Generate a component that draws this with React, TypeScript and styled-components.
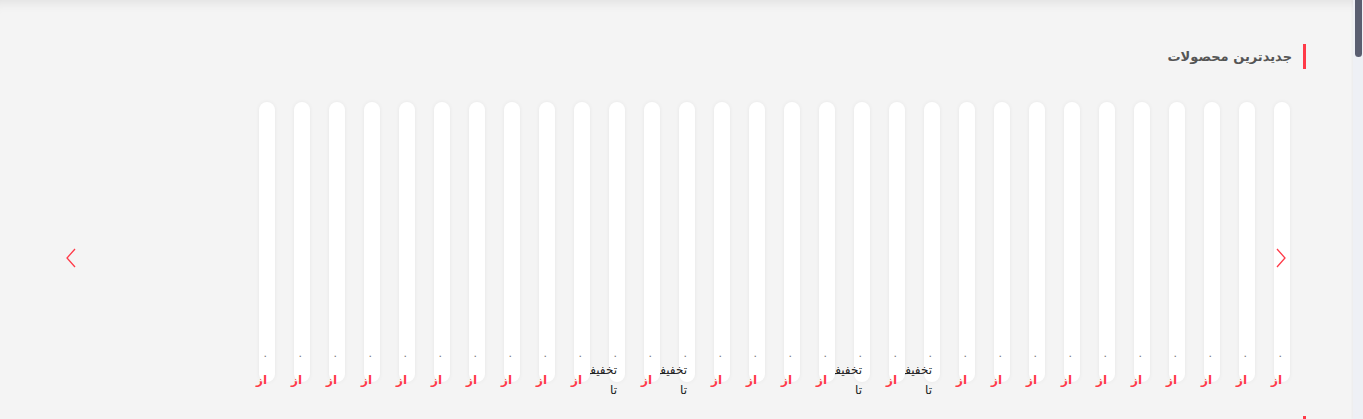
import React from "react";
import styled, { createGlobalStyle } from "styled-components";

const RED = "#ff3a48";

const GlobalStyle = createGlobalStyle`
    html, body {
        background: #f4f4f4;
        overflow: hidden;
    }
    body {
        margin: 0;
        font-family: "DejaVu Sans", "Noto Sans", sans-serif;
    }
`;

const sections = [
    "جدیدترین محصولات",
    "پرفروش‌ترین محصولات",
    "پیشنهاد ویژه",
];

// indices (from the right) of the cards that carry a discount
const discounted = [10, 12, 17, 19];

const products = Array.from({ length: 30 }, (_, i) => ({
    id: i,
    price: ".",
    discount: discounted.includes(i),
}));

const Chevron = ({ dir }: { dir: "left" | "right" }) => (
    <svg width="10" height="20" viewBox="0 0 10 20" fill="none">
        <polyline
            points={dir === "right" ? "1,1 9,10 1,19" : "9,1 1,10 9,19"}
            stroke={RED}
            strokeWidth="1.3"
        />
    </svg>
);

const ProductCard = ({ price, discount }: { price: string; discount: boolean }) => (
    <Card>
        <ImageBox />
        <PriceDot>{price}</PriceDot>
        {discount ? (
            <>
                <DiscountLabel>تخفیف</DiscountLabel>
                <DiscountLabel>تا</DiscountLabel>
            </>
        ) : (
            <FromLabel>از</FromLabel>
        )}
    </Card>
);

const App = () => {
    return (
        <Page>
            <GlobalStyle />
            {sections.map((title) => (
                <Section key={title}>
                    <Title>{title}</Title>
                    <Carousel>
                        <Track>
                            {products.map((p) => (
                                <ProductCard key={p.id} price={p.price} discount={p.discount} />
                            ))}
                        </Track>
                        <Arrow side="right" aria-label="next">
                            <Chevron dir="right" />
                        </Arrow>
                        <Arrow side="left" aria-label="previous">
                            <Chevron dir="left" />
                        </Arrow>
                    </Carousel>
                </Section>
            ))}
            <ScrollRail>
                <ScrollThumb />
            </ScrollRail>
        </Page>
    );
};

const Page = styled.main`
    direction: rtl;
    padding: 44px 10px 0 0;
    box-shadow: inset 0 12px 12px -10px rgba(0, 0, 0, 0.09);
`;

const ScrollRail = styled.div`
    position: fixed;
    top: 0;
    right: 0;
    bottom: 0;
    width: 10px;
    background: #eef0f5;
    box-shadow: -1px 0 2px rgba(0, 0, 0, 0.04);
    z-index: 10;
`;

const ScrollThumb = styled.div`
    width: 7px;
    height: 57px;
    margin-right: 1px;
    background: #5a5e70;
    border-radius: 0 0 4px 4px;
`;

const Section = styled.section`
    max-width: 1259px;
    margin: 0 auto 2px;
`;

const Title = styled.h2`
    margin: 0 0 33px;
    height: 25px;
    padding-right: 11px;
    border-right: 3px solid ${RED};
    font-size: 13px;
    font-weight: bold;
    line-height: 25px;
    color: #555;
`;

const Carousel = styled.div`
    position: relative;
    height: 312px;
`;

const Track = styled.div`
    display: flex;
    align-items: flex-start;
    gap: 19px;
    padding-right: 16px;
`;

const Card = styled.div`
    position: relative;
    flex: none;
    display: flex;
    flex-direction: column;
    box-sizing: border-box;
    width: 16px;
    height: 280px;
    padding: 0 8px;
    background: #fff;
    border-radius: 8px;
    box-shadow: 0 0 4px rgba(0, 0, 0, 0.06);
    white-space: nowrap;
`;

const ImageBox = styled.div`
    flex: none;
    height: 246px;
`;

const PriceDot = styled.div`
    font-size: 11px;
    line-height: 12px;
    color: #777;
`;

const FromLabel = styled.div`
    margin-top: 10px;
    font-size: 12px;
    font-weight: bold;
    line-height: 20px;
    color: ${RED};
`;

const DiscountLabel = styled.div`
    font-size: 12px;
    line-height: 20px;
    color: #222;
    &:first-of-type {
        margin-top: 1px;
    }
`;

const Arrow = styled.button<{ side: "left" | "right" }>`
    position: absolute;
    top: 50%;
    ${(p) => (p.side === "right" ? "right: 20px;" : "left: 19px;")}
    transform: translateY(-50%);
    z-index: 1;
    display: flex;
    width: 10px;
    height: 20px;
    padding: 0;
    border: none;
    background: none;
    cursor: pointer;
`;

export default App;
